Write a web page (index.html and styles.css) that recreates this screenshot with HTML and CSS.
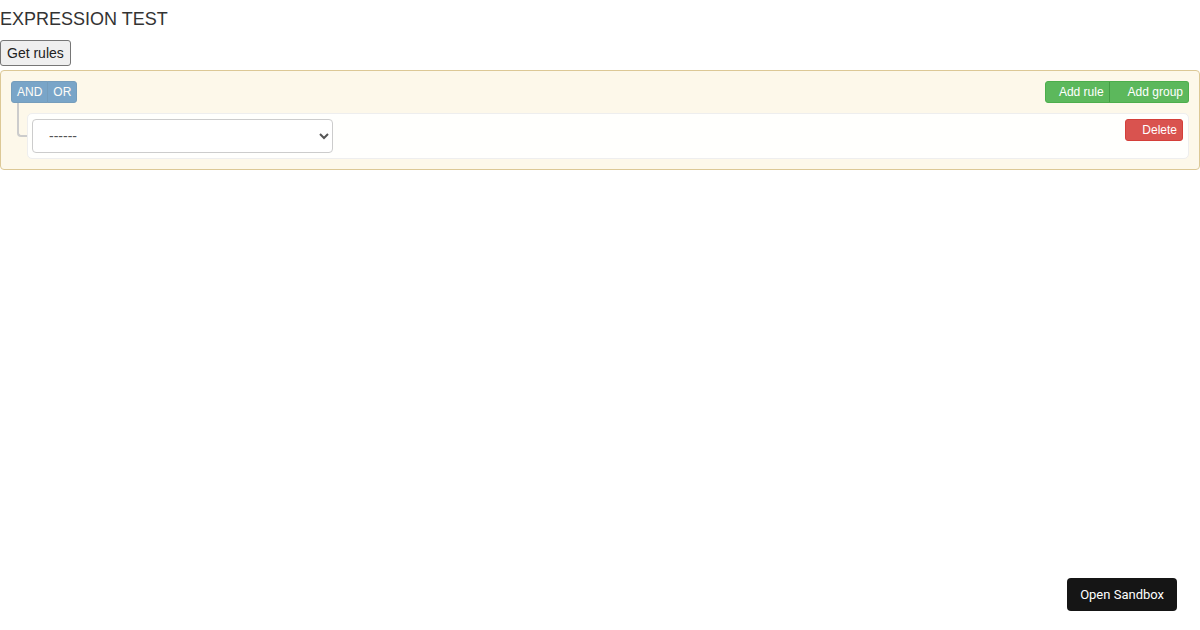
FILE: index.html
```html
<!DOCTYPE html>
<html>
<head>
<meta charset="utf-8">
<link rel="stylesheet" href="styles.css">
</head>
<body>
<div class="title">EXPRESSION TEST</div>
<button class="get-rules">Get rules</button>
<div class="builder">
  <div class="group-header">
    <div class="btn-group conditions">
      <span class="btn btn-primary">AND</span><span class="btn btn-primary">OR</span>
    </div>
    <div class="btn-group">
      <span class="btn btn-success add-rule">Add rule</span><span class="btn btn-success add-group">Add group</span>
    </div>
  </div>
  <ul class="rules-list">
    <li class="rule">
      <select class="filter">
        <option>------</option>
      </select>
      <span class="btn btn-danger delete">Delete</span>
    </li>
  </ul>
</div>
<div class="sandbox">Open Sandbox</div>
</body>
</html>
```
FILE: styles.css
```css
html, body {
  margin: 0;
  padding: 0;
  background: #fff;
}
body {
  font-family: "Liberation Sans", Arial, Helvetica, sans-serif;
  font-size: 14px;
  line-height: 20px;
  color: #333;
}
.title {
  font-size: 18px;
  line-height: 26px;
  padding-top: 6px;
  height: 34px;
}
.get-rules {
  display: block;
  margin: 0;
  font-family: "Liberation Sans", Arial, sans-serif;
  font-size: 14px;
  line-height: 20px;
  color: #222;
  background: #efefef;
  border: 1px solid #767676;
  border-radius: 3px;
  padding: 2px 6px;
  height: 26px;
}
.builder {
  margin-top: 4px;
  border: 1px solid #dcc896;
  background: #fdf8ea;
  border-radius: 4px;
  padding: 10px;
}
.group-header {
  display: flex;
  justify-content: space-between;
  align-items: flex-start;
  margin-bottom: 10px;
}
.btn-group {
  display: flex;
}
.btn {
  display: inline-block;
  font-size: 12px;
  line-height: 18px;
  padding: 1px 5px;
  border: 1px solid transparent;
  color: #fff;
  white-space: nowrap;
}
.btn-group .btn:first-child {
  border-radius: 3px 0 0 3px;
}
.btn-group .btn:last-child {
  border-radius: 0 3px 3px 0;
  margin-left: -1px;
}
.btn-primary {
  background: #337ab7;
  border-color: #2e6da4;
}
.conditions {
  opacity: .65;
}
.btn-success {
  background: #5cb85c;
  border-color: #4cae4c;
}
.btn-success.add-group {
  border-left-color: #449d44;
}
.add-rule {
  padding-left: 13px;
}
.add-group {
  padding-left: 18px;
}
.btn-danger {
  background: #d9534f;
  border-color: #d43f3a;
  border-radius: 3px;
}
.rules-list {
  list-style: none;
  margin: 0;
  padding: 0 0 0 16px;
}
.rule {
  position: relative;
  display: flex;
  justify-content: space-between;
  align-items: flex-start;
  padding: 5px 5px 5px 4px;
  border: 1px solid #eee;
  border-radius: 5px;
  background: rgba(255, 255, 255, .9);
}
.rule::before {
  content: "";
  position: absolute;
  left: -11px;
  top: -11px;
  width: 8px;
  height: 32px;
  border-left: 2px solid #ccc;
  border-bottom: 2px solid #ccc;
  border-bottom-left-radius: 4px;
}
.filter {
  width: 301px;
  height: 34px;
  font-family: "Liberation Sans", Arial, sans-serif;
  font-size: 14px;
  color: #555;
  background: #fff;
  border: 1px solid #ccc;
  border-radius: 4px;
  padding: 6px 12px;
}
.delete {
  padding-left: 16px;
  padding-right: 5px;
}
.sandbox {
  position: fixed;
  right: 23px;
  bottom: 19px;
  height: 33px;
  box-sizing: border-box;
  padding: 0 13px;
  background: #151515;
  color: #fff;
  border-radius: 4px;
  font-family: Roboto, "Liberation Sans", sans-serif;
  font-size: 13px;
  line-height: 33px;
}
```
